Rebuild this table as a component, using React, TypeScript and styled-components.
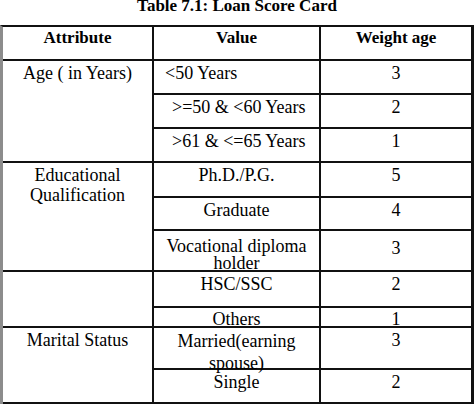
import React from 'react';
import styled, { createGlobalStyle } from 'styled-components';

const GlobalStyle = createGlobalStyle`
  html, body {
    margin: 0;
    padding: 0;
    background: #fff;
  }
  body {
    overflow: hidden;
  }
`;

const Page = styled.div`
  width: 474px;
  height: 404px;
  overflow: hidden;
  font-family: 'Liberation Serif', 'DejaVu Serif', serif;
  color: #000;
`;

const Caption = styled.div`
  height: 25px;
  font-size: 17px;
  font-weight: bold;
  line-height: 12px;
  text-align: center;
`;

const Table = styled.div`
  width: 474px;
  box-sizing: border-box;
  display: grid;
  grid-template-columns: 151px 167px 150px;
  grid-template-rows: 34px 34px 34px 34px 35px 33px 41px 36px 20px 42px 34px;
  border-top: 2px solid #111;
  border-left: 3px solid #8c8c8c;
  border-right: 3px solid #111;
`;

interface CellProps {
  $col: number;
  $row: number;
  $span?: number;
  $indent?: number;
  $pad?: number;
  $lh?: number;
  $head?: boolean;
}

const Cell = styled.div<CellProps>`
  grid-column: ${p => p.$col};
  grid-row: ${p => p.$row} / span ${p => p.$span ?? 1};
  box-sizing: border-box;
  border-bottom: 2px solid #111;
  border-right: ${p => (p.$col < 3 ? '2px solid #111' : 'none')};
  padding: ${p => p.$pad ?? (p.$head ? 1 : 2)}px 0 0 ${p => p.$indent ?? 0}px;
  text-align: ${p => (p.$indent !== undefined ? 'left' : 'center')};
  white-space: ${p => (p.$indent !== undefined ? 'nowrap' : 'normal')};
  font-size: ${p => (p.$head ? 17 : 18)}px;
  font-weight: ${p => (p.$head ? 'bold' : 'normal')};
  line-height: ${p => p.$lh ?? 20}px;
  overflow: visible;
`;

interface Attr {
  label: string;
  row: number;
  span: number;
}

interface Entry {
  value: string;
  weight: string;
  indent?: number;
  pad?: number;
  lh?: number;
}

const attributes: Attr[] = [
  { label: 'Age ( in Years)', row: 2, span: 3 },
  { label: 'Educational Qualification', row: 5, span: 3 },
  { label: '', row: 8, span: 2 },
  { label: 'Marital Status', row: 10, span: 2 },
];

const entries: Entry[] = [
  { value: '<50 Years', weight: '3', indent: 11 },
  { value: '>=50 & <60 Years', weight: '2', indent: 18 },
  { value: '>61 & <=65 Years', weight: '1', indent: 18 },
  { value: 'Ph.D./P.G.', weight: '5' },
  { value: 'Graduate', weight: '4' },
  { value: 'Vocational diploma holder', weight: '3', pad: 7, lh: 17 },
  { value: 'HSC/SSC', weight: '2' },
  { value: 'Others', weight: '1', pad: 1 },
  { value: 'Married(earning spouse)', weight: '3', lh: 22 },
  { value: 'Single', weight: '2' },
];

const App: React.FC = () => (
  <Page>
    <GlobalStyle />
    <Caption>Table 7.1: Loan Score Card</Caption>
    <Table>
      <Cell $col={1} $row={1} $head>Attribute</Cell>
      <Cell $col={2} $row={1} $head>Value</Cell>
      <Cell $col={3} $row={1} $head>Weight age</Cell>

      {attributes.map(a => (
        <Cell key={a.row} $col={1} $row={a.row} $span={a.span}>
          {a.label}
        </Cell>
      ))}

      {entries.map((e, i) => (
        <React.Fragment key={i}>
          <Cell $col={2} $row={i + 2} $indent={e.indent} $pad={e.pad} $lh={e.lh}>
            {e.value}
          </Cell>
          <Cell $col={3} $row={i + 2} $pad={e.pad}>
            {e.weight}
          </Cell>
        </React.Fragment>
      ))}
    </Table>
  </Page>
);

export default App;
